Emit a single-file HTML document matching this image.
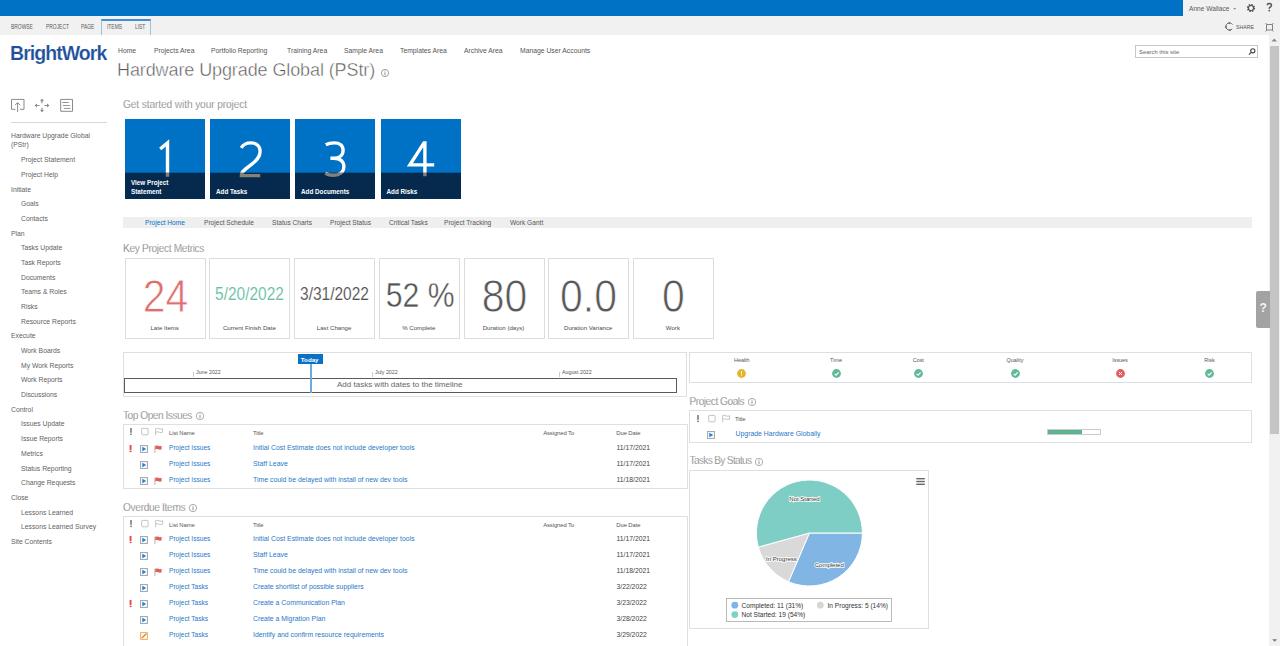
<!DOCTYPE html>
<html><head><meta charset="utf-8">
<style>
*{box-sizing:border-box}
html,body{margin:0;padding:0;width:1280px;height:646px;overflow:hidden;background:#fff;font-family:"Liberation Sans",sans-serif;color:#444}
.a{position:absolute;white-space:nowrap}
#topbar{position:absolute;left:0;top:0;width:1183px;height:16px;background:#0072c6}
#topright{position:absolute;left:1183px;top:0;width:97px;height:16px;background:#f1f1f1}
#ribbon{position:absolute;left:0;top:16px;width:1280px;height:19px;background:#f1f1f1}
.rt{position:absolute;top:23.2px;font-size:6.6px;color:#5a5a5a;letter-spacing:0;transform:scaleX(0.745);transform-origin:0 0}
#tabbox{position:absolute;left:101px;top:19px;width:50px;height:16px;border:1px solid #9cc3e6;border-top:2px solid #3e8fd4;border-bottom:none;background:#f1f1f1}
.logo{position:absolute;left:10px;top:42px;font-size:19.5px;font-weight:bold;color:#1d4f9b;letter-spacing:-0.95px;-webkit-text-stroke:0.15px #fff}
.gn{position:absolute;top:47px;font-size:6.8px;color:#555}
.title{position:absolute;left:117px;top:60px;font-size:18px;color:#555;letter-spacing:-0.1px;-webkit-text-stroke:0.45px #fff}
.nav{position:absolute;font-size:6.8px;color:#5f5f5f}
.h2{position:absolute;font-size:10.2px;color:#666;letter-spacing:-0.35px;-webkit-text-stroke:0.25px #fff}
.tile{position:absolute;top:119px;width:80px;height:80px;background:#0072c6;overflow:hidden}
.tile .num{position:absolute;left:0;top:10px;width:80px;text-align:center;font-size:52px;color:#fff;line-height:60px;-webkit-text-stroke:1.2px #0072c6}
.tile .band{position:absolute;left:0;top:54px;width:80px;height:26px;background:rgba(8,18,40,0.75)}
.tile .lbl{position:absolute;left:6px;font-size:6.3px;font-weight:bold;color:#fff;line-height:9px}
#tabstrip{position:absolute;left:123px;top:217px;width:1129px;height:10.5px;background:#efefef}
.ts{position:absolute;top:219px;font-size:6.6px;color:#555}
.mbox{position:absolute;top:258px;width:81px;height:81px;border:1.6px solid #dadedf}
.mbox .v{position:absolute;left:0;width:79px;text-align:center;white-space:nowrap;color:#555;line-height:1;transform-origin:50% 50%;-webkit-text-stroke:0.8px #fff}
.mbox .l{position:absolute;left:0;top:65.3px;width:78px;text-align:center;font-size:6.1px;color:#4a4a4a;white-space:nowrap}
.box{position:absolute;border:1px solid #dce0e2}
.th{position:absolute;font-size:5.9px;color:#555;letter-spacing:-0.1px}
.td{position:absolute;font-size:6.6px;color:#1f78c8}
.tt{font-size:6.9px}
.dd{position:absolute;font-size:6.8px;color:#444}
#scroll{position:absolute;left:1269px;top:35px;width:11px;height:611px;background:#f1f1f1}
#thumb{position:absolute;left:1270px;top:46px;width:8.8px;height:388px;background:#c4c4c4}
</style></head><body>
<div id="topbar"></div>
<div id="topright"></div>
<div id="ribbon"></div>
<div id="tabbox"></div>
<span class="rt a" style="left:11px">BROWSE</span>
<span class="rt a" style="left:46px">PROJECT</span>
<span class="rt a" style="left:81px">PAGE</span>
<span class="rt a" style="left:107px">ITEMS</span>
<span class="rt a" style="left:135px">LIST</span>
<span class="a" style="left:1189px;top:5px;font-size:6.6px;color:#5a5a5a">Anne Wallace</span>
<span class="a" style="left:1236px;top:24px;font-size:5.2px;color:#555">SHARE</span>

<div class="logo a">BrightWork</div>
<span class="gn a" style="left:118px">Home</span>
<span class="gn a" style="left:154px">Projects Area</span>
<span class="gn a" style="left:211px">Portfolio Reporting</span>
<span class="gn a" style="left:287px">Training Area</span>
<span class="gn a" style="left:344px">Sample Area</span>
<span class="gn a" style="left:400px">Templates Area</span>
<span class="gn a" style="left:464px">Archive Area</span>
<span class="gn a" style="left:520px">Manage User Accounts</span>
<div class="title a">Hardware Upgrade Global (PStr)</div>
<svg class="a" style="left:380px;top:67.5px" width="10" height="10" viewBox="0 0 10 10"><circle cx="5" cy="5" r="3.6" fill="none" stroke="#8a8a8a" stroke-width="0.8"/><path d="M5 4.2V7.3" stroke="#777" stroke-width="0.8"/><circle cx="5" cy="3" r="0.5" fill="#777"/></svg>

<div class="a" style="left:1135px;top:45px;width:123px;height:13px;border:1px solid #c6c6c6;background:#fff"></div>
<span class="a" style="left:1139px;top:48.5px;font-size:5.9px;color:#666">Search this site</span>

<!-- leftnav -->
<span class="nav a" style="left:11px;top:131.5px">Hardware Upgrade Global</span>
<span class="nav a" style="left:11px;top:140.5px">(PStr)</span>
<span class="nav a" style="left:21px;top:156.2px">Project Statement</span>
<span class="nav a" style="left:21px;top:170.9px">Project Help</span>
<span class="nav a" style="left:11px;top:185.6px">Initiate</span>
<span class="nav a" style="left:21px;top:200.2px">Goals</span>
<span class="nav a" style="left:21px;top:214.9px">Contacts</span>
<span class="nav a" style="left:11px;top:229.6px">Plan</span>
<span class="nav a" style="left:21px;top:244.3px">Tasks Update</span>
<span class="nav a" style="left:21px;top:259.0px">Task Reports</span>
<span class="nav a" style="left:21px;top:273.6px">Documents</span>
<span class="nav a" style="left:21px;top:288.3px">Teams &amp; Roles</span>
<span class="nav a" style="left:21px;top:303.0px">Risks</span>
<span class="nav a" style="left:21px;top:317.7px">Resource Reports</span>
<span class="nav a" style="left:11px;top:332.4px">Execute</span>
<span class="nav a" style="left:21px;top:347.0px">Work Boards</span>
<span class="nav a" style="left:21px;top:361.7px">My Work Reports</span>
<span class="nav a" style="left:21px;top:376.4px">Work Reports</span>
<span class="nav a" style="left:21px;top:391.1px">Discussions</span>
<span class="nav a" style="left:11px;top:405.8px">Control</span>
<span class="nav a" style="left:21px;top:420.4px">Issues Update</span>
<span class="nav a" style="left:21px;top:435.1px">Issue Reports</span>
<span class="nav a" style="left:21px;top:449.8px">Metrics</span>
<span class="nav a" style="left:21px;top:464.5px">Status Reporting</span>
<span class="nav a" style="left:21px;top:479.2px">Change Requests</span>
<span class="nav a" style="left:11px;top:493.8px">Close</span>
<span class="nav a" style="left:21px;top:508.5px">Lessons Learned</span>
<span class="nav a" style="left:21px;top:523.2px">Lessons Learned Survey</span>
<span class="nav a" style="left:11px;top:537.9px">Site Contents</span>
<svg class="a" style="left:0;top:90px" width="90" height="30" viewBox="0 90 90 30">
<g fill="none" stroke="#8a8a8a" stroke-width="1">
<path d="M15.3 109.3H11.5V99.4H24V109.3H20"/>
<path d="M17.6 103V112"/><path d="M15 105.2L17.6 102.6L20.2 105.2"/>
<path d="M42 99.3V103.3M42 107.6V111.6M35.2 105.5H39.5M44.4 105.5H48.8"/>
<path d="M60.7 99.4H72.5V111.3H60.7Z"/>
</g>
<g fill="#8a8a8a">
<path d="M40 101.2L42 98.8L44 101.2Z"/><path d="M40 109.8L42 112.2L44 109.8Z"/>
<path d="M37 103.5L34.6 105.5L37 107.5Z"/><path d="M47 103.5L49.4 105.5L47 107.5Z"/>
<rect x="62.2" y="102" width="6.5" height="0.9"/><rect x="63" y="105" width="7" height="0.9"/><rect x="64" y="107.9" width="6.5" height="0.9"/>
</g>
</svg>
<div class="a" style="left:11px;top:122px;width:96px;height:1px;background:#cfd9de"></div>
<span class="h2 a" style="left:123px;top:98.7px;letter-spacing:-0.12px">Get started with your project</span>
<div class="tile" style="left:125px"><svg class="a" style="left:0;top:0" width="80" height="80" viewBox="0 0 80 80"><rect x="0" y="53.7" width="80" height="26.3" fill="#062a4e"/><svg x="0" y="0" width="80" height="53.7" overflow="hidden"><path d="M35.2 30 L42.5 23.9 V57.8" fill="none" stroke="#fff" stroke-width="3.4" stroke-linejoin="miter"/></svg><svg x="0" y="53.7" width="80" height="26.3" viewBox="0 53.7 80 26.3" overflow="hidden"><path d="M35.2 30 L42.5 23.9 V57.8" fill="none" stroke="#858079" stroke-width="3.4"/></svg></svg><div class="lbl" style="top:59px">View Project<br>Statement</div></div>
<div class="tile" style="left:210px"><svg class="a" style="left:0;top:0" width="80" height="80" viewBox="0 0 80 80"><rect x="0" y="53.7" width="80" height="26.3" fill="#062a4e"/><svg x="0" y="0" width="80" height="53.7" overflow="hidden"><path d="M31.2 28.8 C33.4 25.4 36.8 23.9 40.7 23.9 C46.6 23.9 50.1 27.4 50.1 32.6 C50.1 38.2 46.4 41.6 41.2 45.6 C35.2 50.2 31.4 52.4 31.4 56.6 H50.2" fill="none" stroke="#fff" stroke-width="3.4" stroke-linejoin="miter"/></svg><svg x="0" y="53.7" width="80" height="26.3" viewBox="0 53.7 80 26.3" overflow="hidden"><path d="M31.2 28.8 C33.4 25.4 36.8 23.9 40.7 23.9 C46.6 23.9 50.1 27.4 50.1 32.6 C50.1 38.2 46.4 41.6 41.2 45.6 C35.2 50.2 31.4 52.4 31.4 56.6 H50.2" fill="none" stroke="#858079" stroke-width="3.4"/></svg></svg><div class="lbl" style="top:68px">Add Tasks</div></div>
<div class="tile" style="left:295px"><svg class="a" style="left:0;top:0" width="80" height="80" viewBox="0 0 80 80"><rect x="0" y="53.7" width="80" height="26.3" fill="#062a4e"/><svg x="0" y="0" width="80" height="53.7" overflow="hidden"><path d="M30.8 25.8 C33 24.5 36 23.9 39.2 23.9 C44.8 23.9 48.1 26.8 48.1 31.2 C48.1 35.8 44.6 39.2 38.8 39.2 H35.4 M38.8 39.2 C45.3 39.2 48.9 42.4 48.9 47.6 C48.9 53 44.8 56.2 38.6 56.2 C35.4 56.2 32.6 55.6 30.3 54.2" fill="none" stroke="#fff" stroke-width="3.4" stroke-linejoin="miter"/></svg><svg x="0" y="53.7" width="80" height="26.3" viewBox="0 53.7 80 26.3" overflow="hidden"><path d="M30.8 25.8 C33 24.5 36 23.9 39.2 23.9 C44.8 23.9 48.1 26.8 48.1 31.2 C48.1 35.8 44.6 39.2 38.8 39.2 H35.4 M38.8 39.2 C45.3 39.2 48.9 42.4 48.9 47.6 C48.9 53 44.8 56.2 38.6 56.2 C35.4 56.2 32.6 55.6 30.3 54.2" fill="none" stroke="#858079" stroke-width="3.4"/></svg></svg><div class="lbl" style="top:68px">Add Documents</div></div>
<div class="tile" style="left:380.5px"><svg class="a" style="left:0;top:0" width="80" height="80" viewBox="0 0 80 80"><rect x="0" y="53.7" width="80" height="26.3" fill="#062a4e"/><svg x="0" y="0" width="80" height="53.7" overflow="hidden"><path d="M43.9 57.2 V23.9 H43 L28.9 45.9 H53.2" fill="none" stroke="#fff" stroke-width="3.4" stroke-linejoin="miter"/></svg><svg x="0" y="53.7" width="80" height="26.3" viewBox="0 53.7 80 26.3" overflow="hidden"><path d="M43.9 57.2 V23.9 H43 L28.9 45.9 H53.2" fill="none" stroke="#858079" stroke-width="3.4"/></svg></svg><div class="lbl" style="top:68px">Add Risks</div></div>
<div id="tabstrip"></div>
<span class="ts a" style="left:145px;color:#0072c6">Project Home</span>
<span class="ts a" style="left:204px;color:#555">Project Schedule</span>
<span class="ts a" style="left:272px;color:#555">Status Charts</span>
<span class="ts a" style="left:330px;color:#555">Project Status</span>
<span class="ts a" style="left:389px;color:#555">Critical Tasks</span>
<span class="ts a" style="left:444px;color:#555">Project Tracking</span>
<span class="ts a" style="left:510px;color:#555">Work Gantt</span>
<span class="h2 a" style="left:123px;top:242.5px">Key Project Metrics</span>
<div class="mbox" style="left:124.7px"><div class="v" style="top:14.3px;font-size:46px;color:#df6e6e;transform:scaleX(0.89)">24</div><div class="l">Late Items</div></div>
<div class="mbox" style="left:209.4px"><div class="v" style="top:26.6px;font-size:17.6px;color:#6abfa5;-webkit-text-stroke:0.1px #fff;transform:scaleX(0.88)">5/20/2022</div><div class="l">Current Finish Date</div></div>
<div class="mbox" style="left:294.1px"><div class="v" style="top:26.6px;font-size:17.6px;color:#555;-webkit-text-stroke:0.1px #fff;transform:scaleX(0.88)">3/31/2022</div><div class="l">Last Change</div></div>
<div class="mbox" style="left:378.8px"><div class="v" style="top:17.6px;font-size:35.3px;color:#555;-webkit-text-stroke:0.4px #fff;transform:scaleX(0.855)">52 %</div><div class="l">% Complete</div></div>
<div class="mbox" style="left:463.5px"><div class="v" style="top:14.3px;font-size:46px;color:#595959;transform:scaleX(0.89)">80</div><div class="l">Duration (days)</div></div>
<div class="mbox" style="left:548.2px"><div class="v" style="top:14.3px;font-size:46px;color:#595959;transform:scaleX(0.89)">0.0</div><div class="l">Duration Variance</div></div>
<div class="mbox" style="left:632.9px"><div class="v" style="top:14.3px;font-size:46px;color:#595959;transform:scaleX(0.89)">0</div><div class="l">Work</div></div>
<div class="box" style="left:123px;top:352px;width:564px;height:45px;border-width:1.8px"></div>
<div class="a" style="left:124px;top:378px;width:553px;height:15px;border:1.5px solid #5a5a5a"></div>
<span class="a" style="left:337px;top:380px;font-size:8px;color:#666">Add tasks with dates to the timeline</span>
<div class="a" style="left:298.3px;top:354px;width:24.6px;height:10.4px;background:#0a72c6"></div>
<span class="a" style="left:300.8px;top:355.6px;font-size:6.2px;font-weight:bold;color:#fff">Today</span>
<div class="a" style="left:310.4px;top:364px;width:1.3px;height:29px;background:#6aaae0"></div>
<div class="a" style="left:193px;top:372px;width:1px;height:5px;background:#ccc"></div><span class="a" style="left:196px;top:369px;font-size:5.3px;color:#555">June 2022</span>
<div class="a" style="left:372px;top:372px;width:1px;height:5px;background:#ccc"></div><span class="a" style="left:375px;top:369px;font-size:5.3px;color:#555">July 2022</span>
<div class="a" style="left:559px;top:372px;width:1px;height:5px;background:#ccc"></div><span class="a" style="left:562px;top:369px;font-size:5.3px;color:#555">August 2022</span>
<div class="box" style="left:689px;top:352px;width:563px;height:31px;border-width:1.8px"></div>
<span class="a" style="left:721.8px;width:40px;text-align:center;top:357.3px;font-size:5.4px;color:#555">Health</span>
<svg class="a" style="left:737.3px;top:369px" width="9" height="9" viewBox="0 0 9 9"><circle cx="4.5" cy="4.5" r="4.4" fill="#e3b52a"/><rect x="4.05" y="2" width="0.9" height="3.3" fill="#fff"/><rect x="4.05" y="6" width="0.9" height="0.9" fill="#fff"/></svg>
<span class="a" style="left:816px;width:40px;text-align:center;top:357.3px;font-size:5.4px;color:#555">Time</span>
<svg class="a" style="left:831.5px;top:369px" width="9" height="9" viewBox="0 0 9 9"><circle cx="4.5" cy="4.5" r="4.4" fill="#62b995"/><path d="M2.6 4.8L4.1 6.2L6.6 3.3" fill="none" stroke="#fff" stroke-width="1.1"/></svg>
<span class="a" style="left:898.3px;width:40px;text-align:center;top:357.3px;font-size:5.4px;color:#555">Cost</span>
<svg class="a" style="left:913.8px;top:369px" width="9" height="9" viewBox="0 0 9 9"><circle cx="4.5" cy="4.5" r="4.4" fill="#62b995"/><path d="M2.6 4.8L4.1 6.2L6.6 3.3" fill="none" stroke="#fff" stroke-width="1.1"/></svg>
<span class="a" style="left:995px;width:40px;text-align:center;top:357.3px;font-size:5.4px;color:#555">Quality</span>
<svg class="a" style="left:1010.5px;top:369px" width="9" height="9" viewBox="0 0 9 9"><circle cx="4.5" cy="4.5" r="4.4" fill="#62b995"/><path d="M2.6 4.8L4.1 6.2L6.6 3.3" fill="none" stroke="#fff" stroke-width="1.1"/></svg>
<span class="a" style="left:1100px;width:40px;text-align:center;top:357.3px;font-size:5.4px;color:#555">Issues</span>
<svg class="a" style="left:1115.5px;top:369px" width="9" height="9" viewBox="0 0 9 9"><circle cx="4.5" cy="4.5" r="4.4" fill="#e45c5c"/><path d="M3 3L6 6M6 3L3 6" stroke="#fff" stroke-width="1"/></svg>
<span class="a" style="left:1189.5px;width:40px;text-align:center;top:357.3px;font-size:5.4px;color:#555">Risk</span>
<svg class="a" style="left:1205.0px;top:369px" width="9" height="9" viewBox="0 0 9 9"><circle cx="4.5" cy="4.5" r="4.4" fill="#62b995"/><path d="M2.6 4.8L4.1 6.2L6.6 3.3" fill="none" stroke="#fff" stroke-width="1.1"/></svg>
<!--TABLES-->
<span class="h2 a" style="left:123px;top:410px;letter-spacing:-0.5px">Top Open Issues</span>
<svg class="a" style="left:194.8px;top:410.7px" width="10" height="10" viewBox="0 0 10 10"><circle cx="5" cy="5" r="3.7" fill="none" stroke="#9a9a9a" stroke-width="0.8"/><path d="M5 4.2V7.3" stroke="#777" stroke-width="0.8"/><circle cx="5" cy="3" r="0.5" fill="#777"/></svg>
<div class="box" style="left:123px;top:424px;width:564.5px;height:65px;border-width:1.8px"></div>
<svg class="a" style="left:129.1px;top:427px" width="40" height="10" viewBox="0 0 40 10"><rect x="1.1" y="1" width="1.8" height="4.8" fill="#8a8a8a"/><rect x="1.1" y="6.6" width="1.8" height="1.5" fill="#8a8a8a"/><rect x="12.7" y="1.4" width="6.4" height="6.4" rx="0.6" fill="none" stroke="#bdbdbd" stroke-width="0.9"/><path d="M26.7 8.2V1.5Q28.5 1 30 1.8T33.6 1.8V5.2Q32 6 30.2 5.2T26.7 5.2" fill="none" stroke="#bdbdbd" stroke-width="0.9"/></svg>
<span class="th a" style="left:169px;top:429.9px">List Name</span>
<span class="th a" style="left:253px;top:429.9px">Title</span>
<span class="th a" style="left:543.2px;top:429.9px">Assigned To</span>
<span class="th a" style="left:616.3px;top:429.9px">Due Date</span>
<svg class="a" style="left:129.2px;top:445px" width="4" height="8" viewBox="0 0 4 8"><rect x="0.6" y="0" width="1.9" height="4.9" fill="#e54848"/><rect x="0.6" y="5.6" width="1.9" height="1.5" fill="#e54848"/></svg>
<svg class="a" style="left:140.3px;top:445px" width="8" height="8" viewBox="0 0 8 8"><rect x="0.5" y="0.5" width="7" height="7" fill="#f4f7fa" stroke="#a2a2a2" stroke-width="0.9"/><path d="M2.3 1.8 L6.2 4 L2.3 6.2Z" fill="#1f80da"/></svg>
<svg class="a" style="left:154.2px;top:445px" width="9" height="8" viewBox="0 0 9 8"><path d="M0.9 8V0.6" stroke="#aaa" stroke-width="0.9"/><path d="M1.3 0.8Q2.8 0 4.3 0.8T7.6 0.8V4.3Q6 5 4.4 4.3T1.3 4.3Z" fill="#e45c5c"/></svg>
<span class="td a" style="left:169px;top:443.8px">Project Issues</span>
<span class="td a tt" style="left:253px;top:443.8px">Initial Cost Estimate does not include developer tools</span>
<span class="dd a" style="left:616.5px;top:443.8px">11/17/2021</span>
<svg class="a" style="left:140.3px;top:461px" width="8" height="8" viewBox="0 0 8 8"><rect x="0.5" y="0.5" width="7" height="7" fill="#f4f7fa" stroke="#a2a2a2" stroke-width="0.9"/><path d="M2.3 1.8 L6.2 4 L2.3 6.2Z" fill="#1f80da"/></svg>
<span class="td a" style="left:169px;top:459.8px">Project Issues</span>
<span class="td a tt" style="left:253px;top:459.8px">Staff Leave</span>
<span class="dd a" style="left:616.5px;top:459.8px">11/17/2021</span>
<svg class="a" style="left:140.3px;top:477px" width="8" height="8" viewBox="0 0 8 8"><rect x="0.5" y="0.5" width="7" height="7" fill="#f4f7fa" stroke="#a2a2a2" stroke-width="0.9"/><path d="M2.3 1.8 L6.2 4 L2.3 6.2Z" fill="#1f80da"/></svg>
<svg class="a" style="left:154.2px;top:477px" width="9" height="8" viewBox="0 0 9 8"><path d="M0.9 8V0.6" stroke="#aaa" stroke-width="0.9"/><path d="M1.3 0.8Q2.8 0 4.3 0.8T7.6 0.8V4.3Q6 5 4.4 4.3T1.3 4.3Z" fill="#e45c5c"/></svg>
<span class="td a" style="left:169px;top:475.8px">Project Issues</span>
<span class="td a tt" style="left:253px;top:475.8px">Time could be delayed with install of new dev tools</span>
<span class="dd a" style="left:616.5px;top:475.8px">11/18/2021</span>
<span class="h2 a" style="left:123px;top:502px;letter-spacing:-0.35px">Overdue Items</span>
<svg class="a" style="left:188.3px;top:502.6px" width="10" height="10" viewBox="0 0 10 10"><circle cx="5" cy="5" r="3.7" fill="none" stroke="#9a9a9a" stroke-width="0.8"/><path d="M5 4.2V7.3" stroke="#777" stroke-width="0.8"/><circle cx="5" cy="3" r="0.5" fill="#777"/></svg>
<div class="box" style="left:123px;top:516px;width:564.5px;height:140px;border-width:1.8px"></div>
<svg class="a" style="left:129.1px;top:519px" width="40" height="10" viewBox="0 0 40 10"><rect x="1.1" y="1" width="1.8" height="4.8" fill="#8a8a8a"/><rect x="1.1" y="6.6" width="1.8" height="1.5" fill="#8a8a8a"/><rect x="12.7" y="1.4" width="6.4" height="6.4" rx="0.6" fill="none" stroke="#bdbdbd" stroke-width="0.9"/><path d="M26.7 8.2V1.5Q28.5 1 30 1.8T33.6 1.8V5.2Q32 6 30.2 5.2T26.7 5.2" fill="none" stroke="#bdbdbd" stroke-width="0.9"/></svg>
<span class="th a" style="left:169px;top:521.9px">List Name</span>
<span class="th a" style="left:253px;top:521.9px">Title</span>
<span class="th a" style="left:543.2px;top:521.9px">Assigned To</span>
<span class="th a" style="left:616.3px;top:521.9px">Due Date</span>
<svg class="a" style="left:129.2px;top:536.3px" width="4" height="8" viewBox="0 0 4 8"><rect x="0.6" y="0" width="1.9" height="4.9" fill="#e54848"/><rect x="0.6" y="5.6" width="1.9" height="1.5" fill="#e54848"/></svg>
<svg class="a" style="left:140.3px;top:536.3px" width="8" height="8" viewBox="0 0 8 8"><rect x="0.5" y="0.5" width="7" height="7" fill="#f4f7fa" stroke="#a2a2a2" stroke-width="0.9"/><path d="M2.3 1.8 L6.2 4 L2.3 6.2Z" fill="#1f80da"/></svg>
<svg class="a" style="left:154.2px;top:536.3px" width="9" height="8" viewBox="0 0 9 8"><path d="M0.9 8V0.6" stroke="#aaa" stroke-width="0.9"/><path d="M1.3 0.8Q2.8 0 4.3 0.8T7.6 0.8V4.3Q6 5 4.4 4.3T1.3 4.3Z" fill="#e45c5c"/></svg>
<span class="td a" style="left:169px;top:535.0999999999999px">Project Issues</span>
<span class="td a tt" style="left:253px;top:535.0999999999999px">Initial Cost Estimate does not include developer tools</span>
<span class="dd a" style="left:616.5px;top:535.0999999999999px">11/17/2021</span>
<svg class="a" style="left:140.3px;top:552.3px" width="8" height="8" viewBox="0 0 8 8"><rect x="0.5" y="0.5" width="7" height="7" fill="#f4f7fa" stroke="#a2a2a2" stroke-width="0.9"/><path d="M2.3 1.8 L6.2 4 L2.3 6.2Z" fill="#1f80da"/></svg>
<span class="td a" style="left:169px;top:551.0999999999999px">Project Issues</span>
<span class="td a tt" style="left:253px;top:551.0999999999999px">Staff Leave</span>
<span class="dd a" style="left:616.5px;top:551.0999999999999px">11/17/2021</span>
<svg class="a" style="left:140.3px;top:568.3px" width="8" height="8" viewBox="0 0 8 8"><rect x="0.5" y="0.5" width="7" height="7" fill="#f4f7fa" stroke="#a2a2a2" stroke-width="0.9"/><path d="M2.3 1.8 L6.2 4 L2.3 6.2Z" fill="#1f80da"/></svg>
<svg class="a" style="left:154.2px;top:568.3px" width="9" height="8" viewBox="0 0 9 8"><path d="M0.9 8V0.6" stroke="#aaa" stroke-width="0.9"/><path d="M1.3 0.8Q2.8 0 4.3 0.8T7.6 0.8V4.3Q6 5 4.4 4.3T1.3 4.3Z" fill="#e45c5c"/></svg>
<span class="td a" style="left:169px;top:567.0999999999999px">Project Issues</span>
<span class="td a tt" style="left:253px;top:567.0999999999999px">Time could be delayed with install of new dev tools</span>
<span class="dd a" style="left:616.5px;top:567.0999999999999px">11/18/2021</span>
<svg class="a" style="left:140.3px;top:584.3px" width="8" height="8" viewBox="0 0 8 8"><rect x="0.5" y="0.5" width="7" height="7" fill="#f4f7fa" stroke="#a2a2a2" stroke-width="0.9"/><path d="M2.3 1.8 L6.2 4 L2.3 6.2Z" fill="#1f80da"/></svg>
<span class="td a" style="left:169px;top:583.0999999999999px">Project Tasks</span>
<span class="td a tt" style="left:253px;top:583.0999999999999px">Create shortlist of possible suppliers</span>
<span class="dd a" style="left:616.5px;top:583.0999999999999px">3/22/2022</span>
<svg class="a" style="left:129.2px;top:600.3px" width="4" height="8" viewBox="0 0 4 8"><rect x="0.6" y="0" width="1.9" height="4.9" fill="#e54848"/><rect x="0.6" y="5.6" width="1.9" height="1.5" fill="#e54848"/></svg>
<svg class="a" style="left:140.3px;top:600.3px" width="8" height="8" viewBox="0 0 8 8"><rect x="0.5" y="0.5" width="7" height="7" fill="#f4f7fa" stroke="#a2a2a2" stroke-width="0.9"/><path d="M2.3 1.8 L6.2 4 L2.3 6.2Z" fill="#1f80da"/></svg>
<span class="td a" style="left:169px;top:599.0999999999999px">Project Tasks</span>
<span class="td a tt" style="left:253px;top:599.0999999999999px">Create a Communication Plan</span>
<span class="dd a" style="left:616.5px;top:599.0999999999999px">3/23/2022</span>
<svg class="a" style="left:140.3px;top:616.3px" width="8" height="8" viewBox="0 0 8 8"><rect x="0.5" y="0.5" width="7" height="7" fill="#f4f7fa" stroke="#a2a2a2" stroke-width="0.9"/><path d="M2.3 1.8 L6.2 4 L2.3 6.2Z" fill="#1f80da"/></svg>
<span class="td a" style="left:169px;top:615.0999999999999px">Project Tasks</span>
<span class="td a tt" style="left:253px;top:615.0999999999999px">Create a Migration Plan</span>
<span class="dd a" style="left:616.5px;top:615.0999999999999px">3/28/2022</span>
<svg class="a" style="left:140.3px;top:632.3px" width="8" height="8" viewBox="0 0 8 8"><rect x="0.6" y="0.6" width="6.8" height="6.8" fill="#fff6e0" stroke="#e8b050" stroke-width="0.9"/><path d="M1.8 6.2 L6.4 1.6" stroke="#e06040" stroke-width="1.1"/></svg>
<span class="td a" style="left:169px;top:631.0999999999999px">Project Tasks</span>
<span class="td a tt" style="left:253px;top:631.0999999999999px">Identify and confirm resource requirements</span>
<span class="dd a" style="left:616.5px;top:631.0999999999999px">3/29/2022</span>
<span class="h2 a" style="left:689.5px;top:396px;letter-spacing:-0.5px">Project Goals</span>
<svg class="a" style="left:747.2px;top:396.8px" width="10" height="10" viewBox="0 0 10 10"><circle cx="5" cy="5" r="3.7" fill="none" stroke="#9a9a9a" stroke-width="0.8"/><path d="M5 4.2V7.3" stroke="#777" stroke-width="0.8"/><circle cx="5" cy="3" r="0.5" fill="#777"/></svg>
<div class="box" style="left:689px;top:410px;width:563px;height:32.5px;border-width:1.8px"></div>
<svg class="a" style="left:696px;top:413.5px" width="40" height="10" viewBox="0 0 40 10"><rect x="1.1" y="1" width="1.8" height="4.8" fill="#8a8a8a"/><rect x="1.1" y="6.6" width="1.8" height="1.5" fill="#8a8a8a"/><rect x="12.7" y="1.4" width="6.4" height="6.4" rx="0.6" fill="none" stroke="#bdbdbd" stroke-width="0.9"/><path d="M26.7 8.2V1.5Q28.5 1 30 1.8T33.6 1.8V5.2Q32 6 30.2 5.2T26.7 5.2" fill="none" stroke="#bdbdbd" stroke-width="0.9"/></svg>
<span class="th a" style="left:735px;top:415.8px">Title</span>
<svg class="a" style="left:707px;top:430.5px" width="8" height="8" viewBox="0 0 8 8"><rect x="0.5" y="0.5" width="7" height="7" fill="#f4f7fa" stroke="#a2a2a2" stroke-width="0.9"/><path d="M2.3 1.8 L6.2 4 L2.3 6.2Z" fill="#1f80da"/></svg>
<span class="td a tt" style="left:735.5px;top:429.5px">Upgrade Hardware Globally</span>
<div class="a" style="left:1047px;top:429px;width:54px;height:6px;border:1px solid #ccc;background:#fff"></div><div class="a" style="left:1048px;top:430px;width:34px;height:4px;background:#5db48f"></div>
<!--/TABLES-->
<span class="h2 a" style="left:689.5px;top:455px;letter-spacing:-0.7px">Tasks By Status</span>
<svg class="a" style="left:753.9px;top:456.8px" width="10" height="10" viewBox="0 0 10 10"><circle cx="5" cy="5" r="3.7" fill="none" stroke="#9a9a9a" stroke-width="0.8"/><path d="M5 4.2V7.3" stroke="#777" stroke-width="0.8"/><circle cx="5" cy="3" r="0.5" fill="#777"/></svg>
<div class="box" style="left:689px;top:470px;width:240px;height:159px;border-width:1px"></div>
<svg class="a" style="left:689px;top:470px" width="240" height="159" viewBox="0 0 240 159">
<path d="M120.4,63 L173.40,63.00 A53,53 0 0 1 99.57,111.73 Z" fill="#80b5e4" stroke="#fff" stroke-width="1"/>
<path d="M120.4,63 L99.57,111.73 A53,53 0 0 1 69.31,77.10 Z" fill="#d9d9d9" stroke="#fff" stroke-width="1"/>
<path d="M120.4,63 L69.31,77.10 A53,53 0 1 1 173.40,63.00 Z" fill="#7ecec6" stroke="#fff" stroke-width="1"/>
<g font-family="Liberation Sans" font-size="6" fill="#333" stroke="#fff" stroke-width="1.6" paint-order="stroke" text-anchor="middle">
<text x="115.5" y="30.5">Not Started</text>
<text x="92.4" y="90.6">In Progress</text>
<text x="140.3" y="97.2">Completed</text>
</g>
<rect x="227.3" y="8" width="8.5" height="1.4" fill="#666"/><rect x="227.3" y="10.8" width="8.5" height="1.4" fill="#666"/><rect x="227.3" y="13.6" width="8.5" height="1.4" fill="#666"/>
<rect x="37.5" y="128.5" width="165" height="23" fill="#fff" stroke="#aaa" stroke-width="0.8"/>
<circle cx="45.8" cy="135.2" r="3.4" fill="#7cb5ec"/><circle cx="131.3" cy="135.2" r="3.4" fill="#d6d6d6"/><circle cx="45.8" cy="144.6" r="3.4" fill="#7fd0c7"/>
<g font-family="Liberation Sans" font-size="6.6" fill="#333">
<text x="52.5" y="137.8">Completed: 11 (31%)</text>
<text x="138.5" y="137.8">In Progress: 5 (14%)</text>
<text x="52.5" y="147.1">Not Started: 19 (54%)</text>
</g>
</svg>
<div id="scroll"></div>
<div id="thumb"></div>
<div class="a" style="left:1256px;top:290.5px;width:14px;height:37.5px;background:#a3a3a3;border-radius:2px 0 0 2px"></div>
<span class="a" style="left:1259.5px;top:301px;font-size:12px;font-weight:bold;color:#f4f4f4">?</span>
<svg class="a" style="left:1269px;top:634px" width="11" height="12"><path d="M3.2 5.2L5.7 7.8L8.2 5.2Z" fill="#777"/></svg>
<svg class="a" style="left:1180px;top:0" width="100" height="60" viewBox="1180 0 100 60">
<path d="M1233.2 8.2L1236.2 8.2L1234.7 9.6Z" fill="#666"/>
<g transform="translate(1251,8)"><circle r="3.2" fill="none" stroke="#555" stroke-width="1.8" stroke-dasharray="1.4 1.1"/><circle r="2.6" fill="none" stroke="#555" stroke-width="1.3"/></g>
<path d="M1267.3 5.2Q1267.3 3.5 1269.3 3.5Q1271.5 3.5 1271.5 5.3Q1271.5 6.6 1269.8 7.4Q1269.3 7.8 1269.3 8.8" fill="none" stroke="#555" stroke-width="1.5"/><rect x="1268.5" y="9.8" width="1.6" height="1.6" fill="#555"/>
<g fill="none" stroke="#666" stroke-width="1"><path d="M1232.5 24.6A3.6 3.6 0 1 0 1232.2 28.8"/></g>
<circle cx="1229.2" cy="23.1" r="0.9" fill="#666"/><circle cx="1225.8" cy="27" r="0.9" fill="#666"/><circle cx="1229.8" cy="30.2" r="0.9" fill="#666"/>
<g fill="none" stroke="#777" stroke-width="0.9"><path d="M1266.5 24.5H1272.5V30H1266.5Z"/><path d="M1265.5 23L1267 24.5M1273.5 23L1272 24.5M1265.5 31.5L1267 30M1273.5 31.5L1272 30"/></g>
<g fill="none" stroke="#444" stroke-width="1.1"><circle cx="1252.8" cy="50.8" r="2.1"/><path d="M1251.3 52.3L1248.9 54.7"/></g>
<path d="M1271.5 41.5L1274.3 38.5L1277 41.5Z" fill="#888"/>
</svg>
</body></html>
